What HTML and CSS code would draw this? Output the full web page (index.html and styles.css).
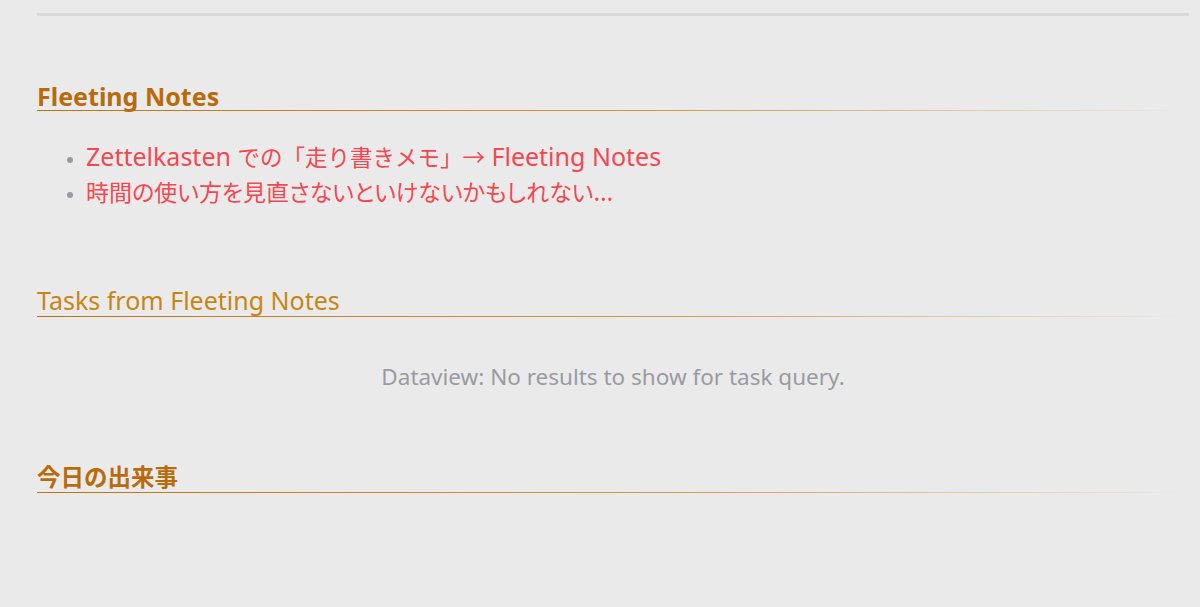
FILE: index.html
```html
<!DOCTYPE html>
<html lang="ja">
<head>
    <meta charset="UTF-8">
    <meta name="viewport" content="width=device-width, initial-scale=1.0">
    <title>Daily Note</title>
    <link rel="stylesheet" href="styles.css">
</head>
<body>
    <div class="note">
        <hr class="top-rule">

        <h2 class="section-title">Fleeting Notes</h2>
        <ul class="fleeting-list">
            <li>Zettelkasten <span class="ja">での「走り書きメモ」→</span> Fleeting Notes</li>
            <li><span class="ja prop">時間の使い方を見直さないといけないかもしれない</span>…</li>
        </ul>

        <h3 class="section-sub">Tasks from Fleeting Notes</h3>
        <div class="dataview-empty">Dataview: No results to show for task query.</div>

        <h2 class="section-title events"><span class="ja">今日の出来事</span></h2>
    </div>
</body>
</html>
```

FILE: styles.css
```css
body {
    margin: 0;
    background: #ebeaeb;
    font-family: "Noto Sans", "Noto Sans CJK JP", sans-serif;
    height: 607px;
    overflow: hidden;
}
.ja {
    font-family: "Noto Sans CJK JP", sans-serif;
}
.ja.prop {
    font-feature-settings: "palt";
}
.note {
    padding: 13px 11px 0 37px;
}
.top-rule {
    border: none;
    height: 3px;
    background: #d9d9da;
    margin: 0;
}
.section-title,
.section-sub {
    margin: 0;
    line-height: 30px;
    background: linear-gradient(to right, #bd7312 0%, #cf9a52 55%, #e2c7a3 80%, rgba(235, 234, 235, 0) 100%) left bottom / 100% 1px no-repeat;
}
.section-title {
    font-size: 25px;
    font-weight: bold;
    color: #b96a0b;
    margin-top: 65px;
}
.section-title .ja {
    font-size: 23.5px;
}
.section-sub {
    font-size: 25px;
    font-weight: normal;
    color: #c78612;
    margin-top: 76px;
    padding-bottom: 2px;
}
.fleeting-list {
    margin: 28px 0 0;
    padding-left: 49px;
    font-size: 25px;
    line-height: 35px;
    color: #f5474f;
}
.fleeting-list .ja {
    font-size: 22.5px;
}
.fleeting-list .ja.prop {
    font-size: 23px;
}
.fleeting-list li::marker {
    color: #9a9aa2;
    font-size: 18px;
}
.dataview-empty {
    text-align: center;
    color: #9a9ba1;
    font-size: 22.5px;
    line-height: 30px;
    margin-top: 45px;
}
.section-title.events {
    margin-top: 69px;
    padding-bottom: 2px;
}
```
